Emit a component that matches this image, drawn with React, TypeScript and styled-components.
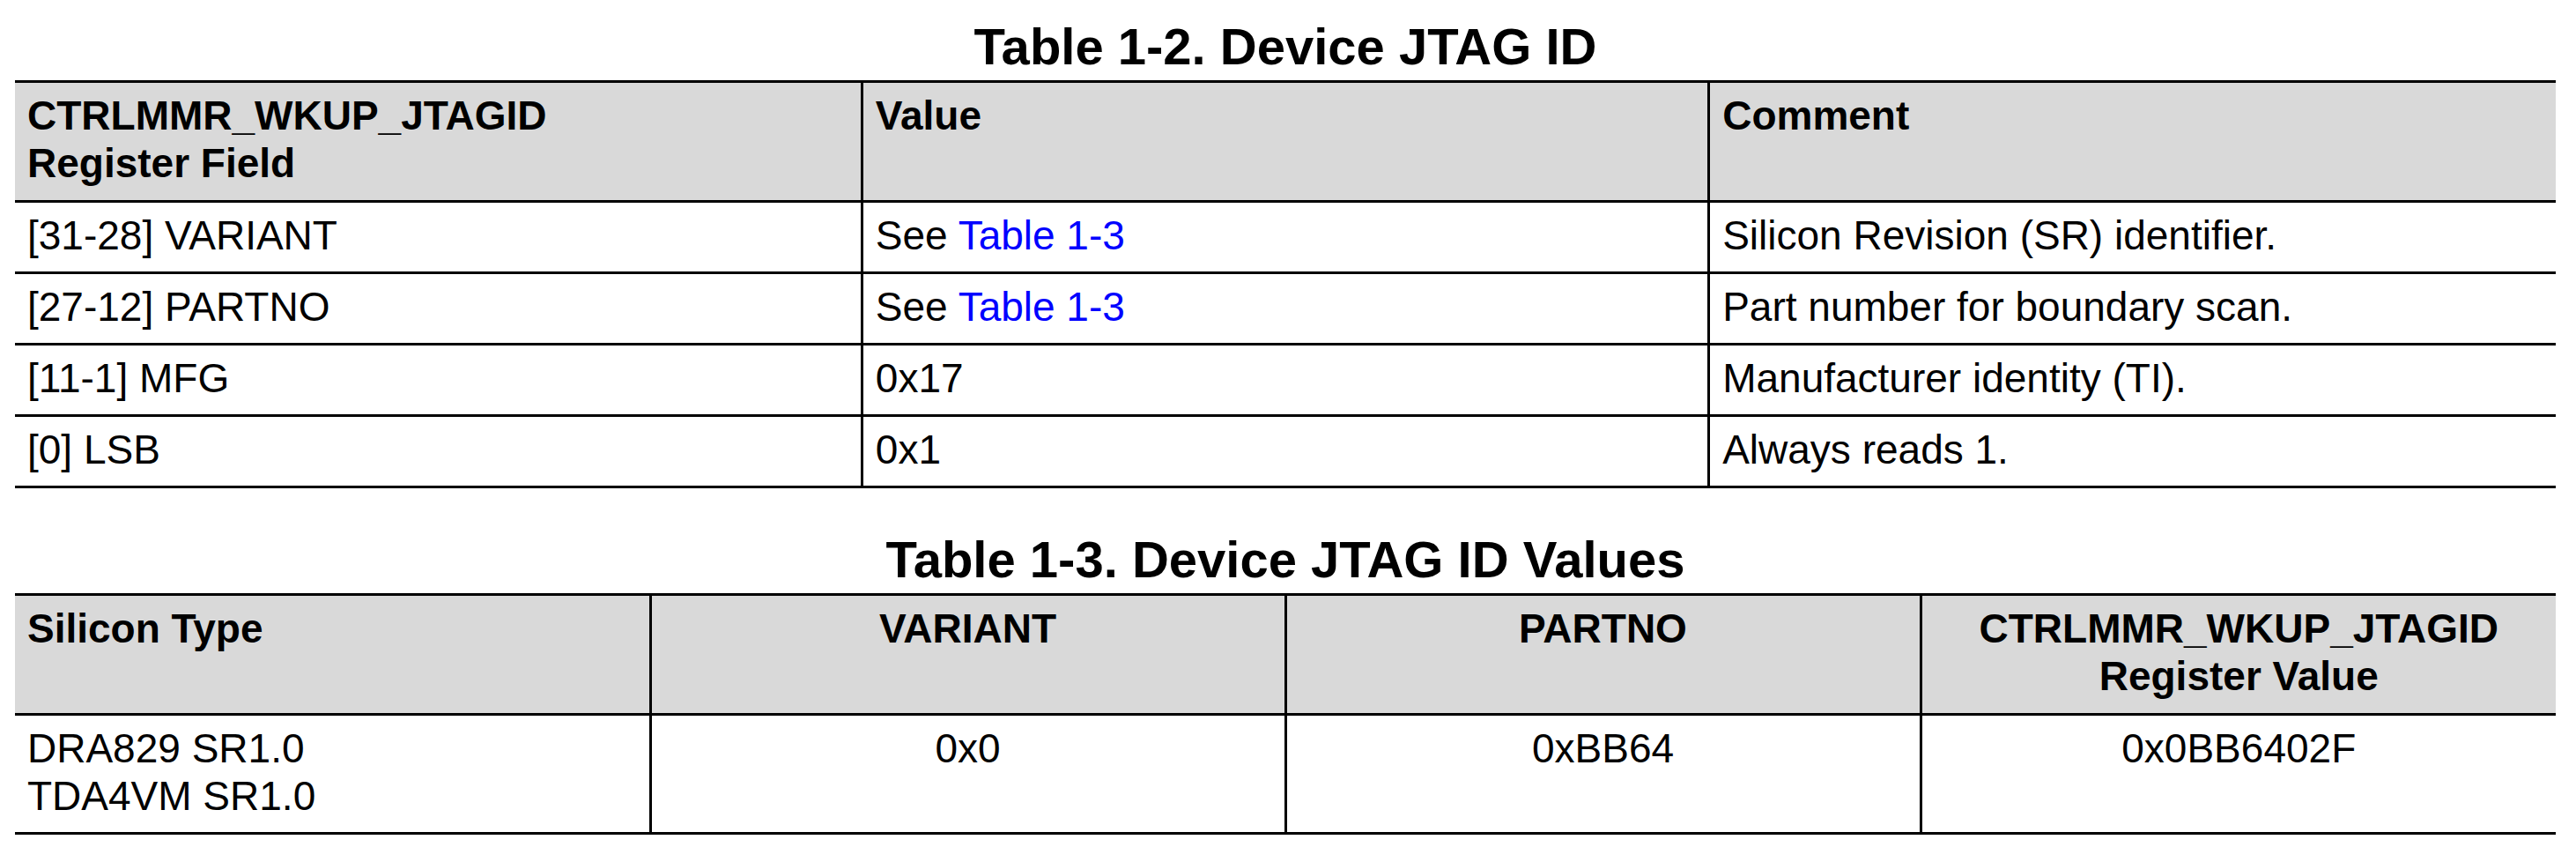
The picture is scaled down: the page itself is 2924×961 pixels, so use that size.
import React from 'react'
import styled, { createGlobalStyle } from 'styled-components'

const GlobalStyle = createGlobalStyle`
    body {
        margin: 0;
        background: #ffffff;
        font-family: 'Liberation Sans', Arial, sans-serif;
        color: #000000;
    }
`

type Align = 'left' | 'center'

const fieldRows = [
    { field: '[31-28] VARIANT', value: 'link', comment: 'Silicon Revision (SR) identifier.' },
    { field: '[27-12] PARTNO', value: 'link', comment: 'Part number for boundary scan.' },
    { field: '[11-1] MFG', value: '0x17', comment: 'Manufacturer identity (TI).' },
    { field: '[0] LSB', value: '0x1', comment: 'Always reads 1.' },
]

export default function App() {
    return (
        <>
            <GlobalStyle />
            <Page>
                <Section>
                    <Caption>Table 1-2. Device JTAG ID</Caption>
                    <Table>
                        <thead>
                            <tr>
                                <HeadCell>
                                    CTRLMMR_WKUP_JTAGID
                                    <br />
                                    Register Field
                                </HeadCell>
                                <HeadCell>Value</HeadCell>
                                <HeadCell>Comment</HeadCell>
                            </tr>
                        </thead>
                        <tbody>
                            {fieldRows.map((row) => (
                                <tr key={row.field}>
                                    <Cell>{row.field}</Cell>
                                    <Cell>
                                        {row.value === 'link' ? (
                                            <>
                                                See <Link>Table 1-3</Link>
                                            </>
                                        ) : (
                                            row.value
                                        )}
                                    </Cell>
                                    <Cell>{row.comment}</Cell>
                                </tr>
                            ))}
                        </tbody>
                    </Table>
                </Section>

                <Section $spaced>
                    <Caption>Table 1-3. Device JTAG ID Values</Caption>
                    <Table>
                        <thead>
                            <tr>
                                <HeadCell>Silicon Type</HeadCell>
                                <HeadCell $align="center">VARIANT</HeadCell>
                                <HeadCell $align="center">PARTNO</HeadCell>
                                <HeadCell $align="center">
                                    CTRLMMR_WKUP_JTAGID
                                    <br />
                                    Register Value
                                </HeadCell>
                            </tr>
                        </thead>
                        <tbody>
                            <tr>
                                <Cell>
                                    DRA829 SR1.0
                                    <br />
                                    TDA4VM SR1.0
                                </Cell>
                                <Cell $align="center">0x0</Cell>
                                <Cell $align="center">0xBB64</Cell>
                                <Cell $align="center">0x0BB6402F</Cell>
                            </tr>
                        </tbody>
                    </Table>
                </Section>
            </Page>
        </>
    )
}

const Page = styled.div`
    padding: 21px 0 0 17px;
    width: 2884px;
`

const Section = styled.section<{ $spaced?: boolean }>`
    display: flex;
    flex-direction: column;
    gap: 6px;
    margin-top: ${(p) => (p.$spaced ? '49px' : '0')};
`

const Caption = styled.div`
    font-size: 58px;
    line-height: 64px;
    font-weight: bold;
    text-align: center;
`

const Table = styled.table`
    width: 100%;
    table-layout: fixed;
    border-collapse: collapse;
    font-size: 46px;
    line-height: 54px;
`

const HeadCell = styled.th<{ $align?: Align }>`
    background: #d9d9d9;
    font-weight: bold;
    text-align: ${(p) => p.$align || 'left'};
    vertical-align: top;
    padding: 10px 14px 15px 14px;
    border-top: 3px solid #000;
    border-bottom: 3px solid #000;

    & + & {
        border-left: 3px solid #000;
    }
`

const Cell = styled.td<{ $align?: Align }>`
    text-align: ${(p) => p.$align || 'left'};
    vertical-align: top;
    padding: 10px 14px 14px 14px;
    border-bottom: 3px solid #000;

    & + & {
        border-left: 3px solid #000;
    }
`

const Link = styled.span`
    color: #0000ff;
`
